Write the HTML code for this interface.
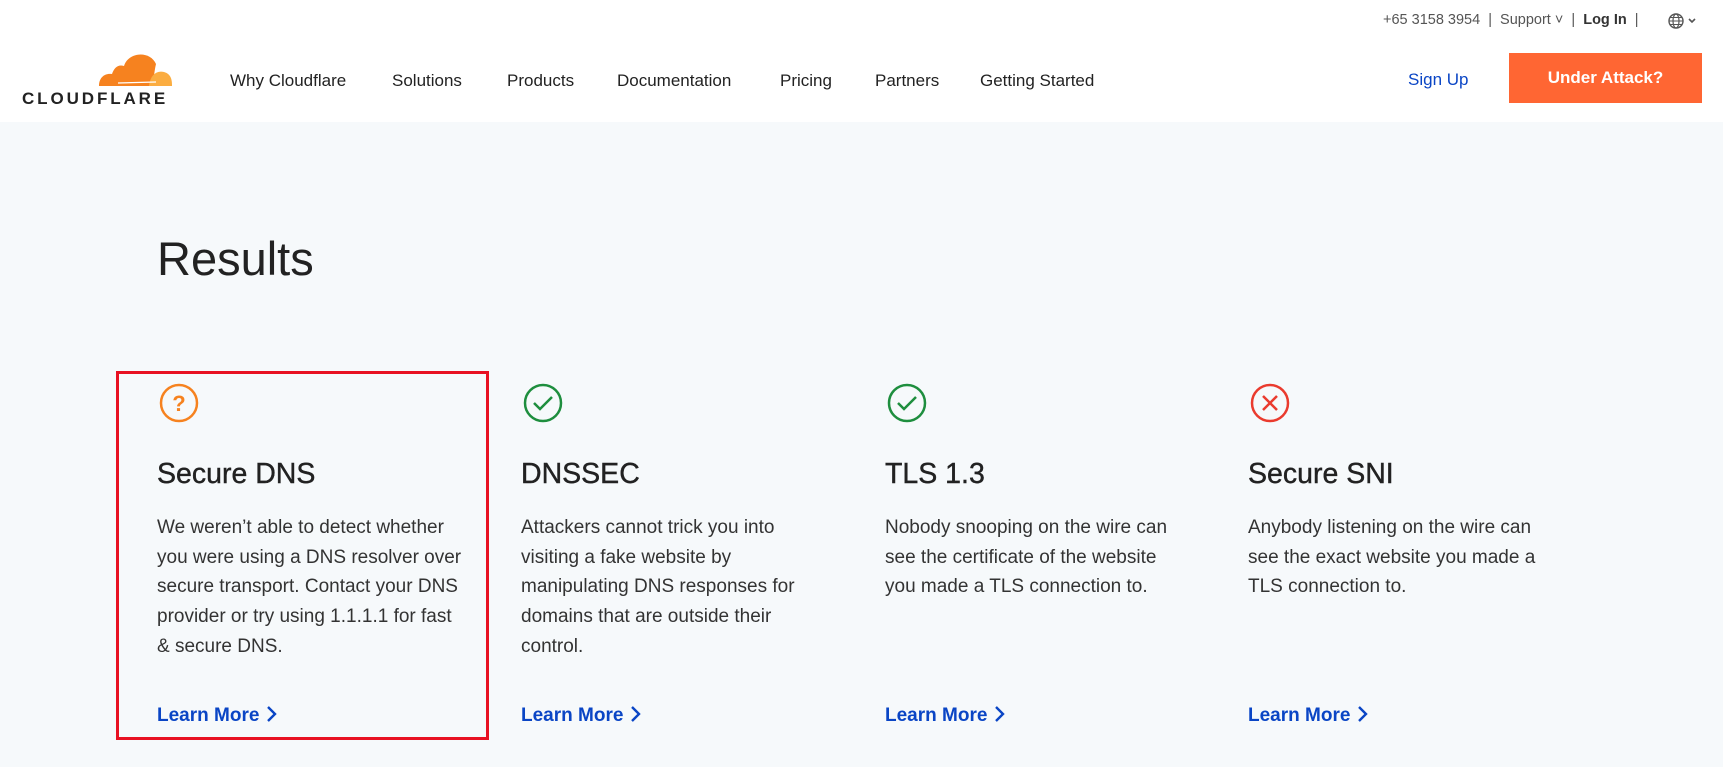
<!DOCTYPE html>
<html><head><meta charset="utf-8"><style>
*{margin:0;padding:0;box-sizing:border-box}
body{width:1723px;height:767px;overflow:hidden;background:#f6f9fb;font-family:"Liberation Sans",sans-serif;color:#222;position:relative}
.hdr{position:absolute;left:0;top:0;width:1723px;height:122px;background:#fff}
.a{position:absolute;white-space:nowrap}
.nav{top:71px;font-size:17px;color:#222}
.top{top:12px;font-size:14.5px;color:#555}
.col{position:absolute;top:380px;width:340px}
.col h2{position:absolute;top:78px;font-size:28.5px;font-weight:normal;color:#222;white-space:nowrap;-webkit-text-stroke:0.4px #222}
.col p{position:absolute;top:133px;white-space:nowrap;font-size:19px;line-height:29.7px;color:#333}
.col .lm{position:absolute;top:325px;font-size:19px;font-weight:bold;color:#0a45c5;white-space:nowrap}
.col .lm svg{vertical-align:-2px;margin-left:6px}
.col svg.ic{position:absolute;left:2px;top:3px}
</style></head><body>
<div class="hdr"></div>
<svg class="a" style="left:22px;top:50px" width="152" height="56" viewBox="0 0 152 56">
<path d="M77 36 C77 28 82 23 90 24 C92 18 96 14 102 16 C106 2 128 0 134 14 C132 22 132 30 130 36 Z" fill="#f6821f"/>
<path d="M127 36 C128 26 134 20 142 22 C150 24 150 32 150 36 Z" fill="#fbad41"/>
<path d="M96 33 L134 32" stroke="#fff" stroke-width="1.2"/>
<text x="0" y="54" font-family="Liberation Sans" font-weight="bold" font-size="17" letter-spacing="2.9" fill="#222">CLOUDFLARE</text>
</svg>
<div class="a nav" style="left:230px">Why Cloudflare</div>
<div class="a nav" style="left:392px">Solutions</div>
<div class="a nav" style="left:507px">Products</div>
<div class="a nav" style="left:617px">Documentation</div>
<div class="a nav" style="left:780px">Pricing</div>
<div class="a nav" style="left:875px">Partners</div>
<div class="a nav" style="left:980px">Getting Started</div>
<div class="a top" style="left:1383px">+65 3158 3954 &nbsp;|&nbsp; Support ˅ &nbsp;|&nbsp; <b style="color:#333">Log In</b> &nbsp;|&nbsp;</div>
<svg class="a" style="left:1668px;top:12px" width="34" height="18" viewBox="0 0 34 18"><circle cx="8" cy="9" r="7" fill="none" stroke="#555" stroke-width="1.4"/><ellipse cx="8" cy="9" rx="3" ry="7" fill="none" stroke="#555" stroke-width="1.2"/><path d="M1 9H15M2 5.5H14M2 12.5H14" stroke="#555" stroke-width="1.1"/><path d="M21 7l3 3 3-3" fill="none" stroke="#555" stroke-width="1.6"/></svg>
<div class="a" style="left:1408px;top:70px;font-size:17px;color:#0a45c5">Sign Up</div>
<div class="a" style="left:1509px;top:53px;width:193px;height:50px;background:#ff6633;color:#fff;font-size:17px;font-weight:bold;text-align:center;line-height:50px">Under Attack?</div>
<div class="a" style="left:157px;top:231px;font-size:47px;color:#222">Results</div>
<div class="a" style="left:116px;top:371px;width:373px;height:369px;border:3px solid #e81123"></div>
<div class="col" style="left:157px">
<svg class="ic" width="42" height="42" viewBox="0 0 42 42"><circle cx="20" cy="20" r="18" fill="none" stroke="#f6821f" stroke-width="2.5"/><text x="20" y="28" text-anchor="middle" font-family="Liberation Sans" font-weight="bold" font-size="22" fill="#f6821f">?</text></svg>
<h2>Secure DNS</h2>
<p>We weren’t able to detect whether<br>you were using a DNS resolver over<br>secure transport. Contact your DNS<br>provider or try using 1.1.1.1 for fast<br>&amp; secure DNS.</p>
<div class="lm">Learn More<svg width="12" height="18" viewBox="0 0 12 18"><path d="M3 2l7 7-7 7" fill="none" stroke="#0a45c5" stroke-width="2.4"/></svg></div></div>
<div class="col" style="left:521px">
<svg class="ic" width="42" height="42" viewBox="0 0 42 42"><circle cx="20" cy="20" r="18" fill="none" stroke="#1e8e3e" stroke-width="2.5"/><path d="M11 20l6 6 12-12" fill="none" stroke="#1e8e3e" stroke-width="2.5"/></svg>
<h2>DNSSEC</h2>
<p>Attackers cannot trick you into<br>visiting a fake website by<br>manipulating DNS responses for<br>domains that are outside their<br>control.</p>
<div class="lm">Learn More<svg width="12" height="18" viewBox="0 0 12 18"><path d="M3 2l7 7-7 7" fill="none" stroke="#0a45c5" stroke-width="2.4"/></svg></div></div>
<div class="col" style="left:885px">
<svg class="ic" width="42" height="42" viewBox="0 0 42 42"><circle cx="20" cy="20" r="18" fill="none" stroke="#1e8e3e" stroke-width="2.5"/><path d="M11 20l6 6 12-12" fill="none" stroke="#1e8e3e" stroke-width="2.5"/></svg>
<h2>TLS 1.3</h2>
<p>Nobody snooping on the wire can<br>see the certificate of the website<br>you made a TLS connection to.</p>
<div class="lm">Learn More<svg width="12" height="18" viewBox="0 0 12 18"><path d="M3 2l7 7-7 7" fill="none" stroke="#0a45c5" stroke-width="2.4"/></svg></div></div>
<div class="col" style="left:1248px">
<svg class="ic" width="42" height="42" viewBox="0 0 42 42"><circle cx="20" cy="20" r="18" fill="none" stroke="#ea3b2e" stroke-width="2.5"/><path d="M13 13l14 14M27 13l-14 14" stroke="#ea3b2e" stroke-width="2.5"/></svg>
<h2>Secure SNI</h2>
<p>Anybody listening on the wire can<br>see the exact website you made a<br>TLS connection to.</p>
<div class="lm">Learn More<svg width="12" height="18" viewBox="0 0 12 18"><path d="M3 2l7 7-7 7" fill="none" stroke="#0a45c5" stroke-width="2.4"/></svg></div></div>
</body></html>
